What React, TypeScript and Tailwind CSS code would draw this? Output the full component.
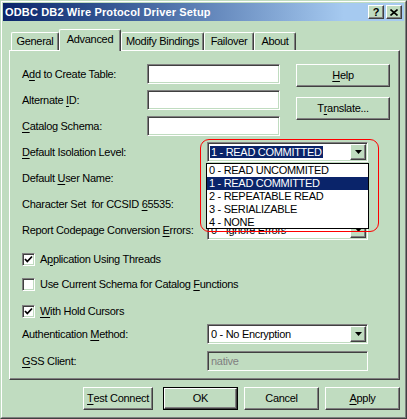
import type { ReactNode } from 'react'

const raised =
  'border border-t-white border-l-white border-b-[#404040] border-r-[#404040] shadow-[inset_-1px_-1px_0_#808080]'
const sunken =
  'border border-t-[#808080] border-l-[#808080] border-b-white border-r-white shadow-[inset_1px_1px_0_#404040,inset_-1px_-1px_0_#c0dcc0]'

function U({ children }: { children: ReactNode }) {
  return <span className="underline decoration-1 underline-offset-[2px]">{children}</span>
}

function Arrow() {
  return (
    <div className={`${raised} bg-[#c0dcc0] w-[16px] h-[16px] flex items-center justify-center shrink-0`}>
      <svg width="7" height="4" viewBox="0 0 7 4">
        <polygon points="0,0 7,0 3.5,4" fill="#000" />
      </svg>
    </div>
  )
}

function Check({ checked, children }: { checked?: boolean; children: ReactNode }) {
  return (
    <div className="h-[20px] flex items-center">
      <div className={`${sunken} bg-white w-[13px] h-[13px] flex items-center justify-center`}>
        {checked && (
          <svg width="9" height="9" viewBox="0 0 9 9">
            <polyline points="1,4 3.3,6.5 8,1.5" fill="none" stroke="#000" strokeWidth="1.8" />
          </svg>
        )}
      </div>
      <span className="ml-[5px]">{children}</span>
    </div>
  )
}

const tabs = ['General', 'Advanced', 'Modify Bindings', 'Failover', 'About']
const tabWidths = ['w-[48px]', 'w-[62px]', 'w-[83px]', 'w-[50px]', 'w-[42px]']

const levels = ['0 - READ UNCOMMITED', '1 - READ COMMITTED', '2 - REPEATABLE READ', '3 - SERIALIZABLE', '4 - NONE']

export default function App() {
  return (
    <div
      className="w-[407px] h-[419px] overflow-hidden bg-[#c0dcc0] border border-t-[#c0dcc0] border-l-[#c0dcc0] border-b-[#404040] border-r-[#404040] text-[11px] text-black tracking-[-0.3px]"
      style={{ fontFamily: '"Liberation Sans", Arial, sans-serif' }}
    >
      <div className="h-full border border-t-white border-l-white border-b-[#808080] border-r-[#808080] p-px">
        {/* Title bar */}
        <div className="h-[18px] flex items-center bg-linear-to-r from-[#0a246a] to-[#a6caf0] to-85%">
          <span className="pl-[2px] font-bold text-white tracking-[0.15px] flex-1">
            ODBC DB2 Wire Protocol Driver Setup
          </span>
          <div className={`${raised} bg-[#c0dcc0] w-[16px] h-[14px] flex items-center justify-center font-bold text-[11px] leading-none`}>
            ?
          </div>
          <div className={`${raised} bg-[#c0dcc0] w-[16px] h-[14px] ml-[2px] mr-[2px] flex items-center justify-center`}>
            <svg width="8" height="7" viewBox="0 0 8 7">
              <path d="M0.5 0.5 L7.5 6.5 M7.5 0.5 L0.5 6.5" stroke="#000" strokeWidth="1.6" />
            </svg>
          </div>
        </div>

        <div className="ml-[6px] w-[391px] pt-[8px]">
          {/* Tabs */}
          <div className="h-[21px] flex items-end pl-[2px]">
            {tabs.map((t, i) =>
              i === 1 ? (
                <div
                  key={t}
                  className={`${tabWidths[i]} h-[22px] mb-[-1px] relative z-10 bg-[#c0dcc0] border-t border-l border-t-white border-l-white border-r border-r-[#404040] shadow-[inset_-1px_0_0_#808080] rounded-t-[2px] flex items-center justify-center pb-[3px]`}
                >
                  {t}
                </div>
              ) : (
                <div
                  key={t}
                  className={`${tabWidths[i]} h-[18px] border-t border-l border-t-white border-l-white border-r border-r-[#404040] shadow-[inset_-1px_0_0_#808080] rounded-t-[2px] flex items-center justify-center`}
                >
                  {t}
                </div>
              ),
            )}
          </div>

          {/* Panel */}
          <div className={`h-[330px] ${raised}`}>
            <div className="flex pl-[12px] pt-[13px]">
              <div className="flex flex-col gap-[6px]">
                {[
                  <>A<U>d</U>d to Create Table:</>,
                  <>Alternate <U>I</U>D:</>,
                  <><U>C</U>atalog Schema:</>,
                ].map((l, i) => (
                  <div key={i} className="flex items-center h-[20px]">
                    <span className="w-[125px]">{l}</span>
                    <div className={`${sunken} bg-white w-[133px] h-[20px]`} />
                  </div>
                ))}
              </div>
              <div className="ml-[16px] flex flex-col gap-[10px]">
                <div className={`${raised} w-[94px] h-[23px] flex items-center justify-center`}>
                  <U>H</U>elp
                </div>
                <div className={`${raised} w-[94px] h-[23px] flex items-center justify-center`}>
                  T<U>r</U>anslate...
                </div>
              </div>
            </div>

            <div className="flex flex-col gap-[6px] mt-[6px] pl-[12px]">
              {/* Isolation level, open */}
              <div className="flex items-center h-[20px]">
                <span className="w-[185px]">
                  <U>D</U>efault Isolation Level:
                </span>
                <div className="relative">
                  <div className={`${sunken} bg-white w-[161px] h-[20px] flex items-center p-px`}>
                    <div className="flex-1 pl-px">
                      <span className="bg-[#0a246a] text-white px-px">1 - READ COMMITTED</span>
                    </div>
                    <Arrow />
                  </div>
                  <div className="absolute left-[-1px] top-[21px] w-[163px] h-[66px] bg-white border border-black z-20">
                    {levels.map((lv, i) => (
                      <div
                        key={lv}
                        className={`h-[13px] leading-[13px] px-[2px] ${i === 1 ? 'bg-[#0a246a] text-white' : ''}`}
                      >
                        {lv}
                      </div>
                    ))}
                  </div>
                  <div className="absolute left-[-7px] top-[-3px] w-[179px] h-[93px] border border-[#ff0000] rounded-[9px] z-30 pointer-events-none" />
                </div>
              </div>
              <div className="flex items-center h-[20px]">
                <span className="w-[185px]">
                  Default <U>U</U>ser Name:
                </span>
                <div className={`${sunken} bg-white w-[161px] h-[20px]`} />
              </div>
              <div className="flex items-center h-[20px]">
                <span className="w-[185px] whitespace-pre">
                  Character Set  for CCSID <U>6</U>5535:
                </span>
                <div className={`${sunken} bg-white w-[161px] h-[20px]`} />
              </div>
              <div className="flex items-center h-[20px]">
                <span className="w-[185px]">
                  Report Codepage Conversion <U>E</U>rrors:
                </span>
                <div className={`${sunken} bg-white w-[161px] h-[20px] flex items-center p-px`}>
                  <span className="flex-1 pl-[2px]">0 - Ignore Errors</span>
                  <Arrow />
                </div>
              </div>
            </div>

            <div className="pl-[12px]">
              <div className="mt-[9px]">
                <Check checked>
                  A<U>p</U>plication Using Threads
                </Check>
              </div>
              <div className="mt-[5px]">
                <Check>
                  Use Current Schema for Catalog <U>F</U>unctions
                </Check>
              </div>
              <div className="mt-[7px]">
                <Check checked>
                  <U>W</U>ith Hold Cursors
                </Check>
              </div>
              <div className="mt-[3px] flex items-center h-[20px]">
                <span className="w-[185px]">
                  Authentication <U>M</U>ethod:
                </span>
                <div className={`${sunken} bg-white w-[161px] h-[20px] flex items-center p-px`}>
                  <span className="flex-1 pl-[2px]">0 - No Encryption</span>
                  <Arrow />
                </div>
              </div>
              <div className="mt-[7px] flex items-center h-[20px]">
                <span className="w-[185px]">
                  <U>G</U>SS Client:
                </span>
                <div className={`${sunken} bg-[#c0dcc0] w-[161px] h-[20px] flex items-center pl-[3px] text-[#808080]`}>
                  native
                </div>
              </div>
            </div>
          </div>

          {/* Bottom buttons */}
          <div className="mt-[7px] flex justify-end gap-[6px]">
            <div className={`${raised} w-[70px] h-[23px] mr-[4px] flex items-center justify-center`}>
              <U>T</U>est Connect
            </div>
            <div className="w-[75px] h-[23px] border border-black">
              <div className={`${raised} h-full flex items-center justify-center`}>OK</div>
            </div>
            <div className={`${raised} w-[75px] h-[23px] flex items-center justify-center`}>Cancel</div>
            <div className={`${raised} w-[75px] h-[23px] flex items-center justify-center`}>
              <U>A</U>pply
            </div>
          </div>
        </div>
      </div>
    </div>
  )
}
